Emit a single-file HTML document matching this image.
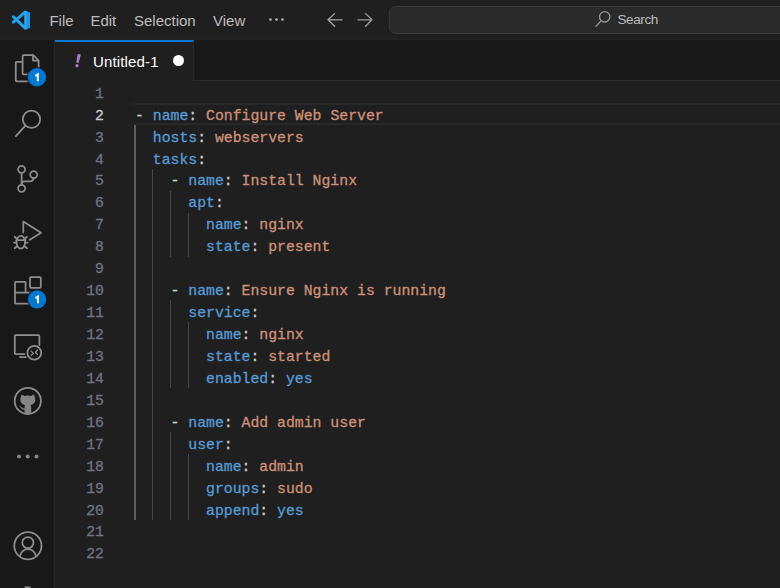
<!DOCTYPE html>
<html><head><meta charset="utf-8">
<style>
*{margin:0;padding:0;box-sizing:border-box}
html,body{width:780px;height:588px;overflow:hidden;background:#1f1f1f}
body{position:relative;font-family:"Liberation Sans",sans-serif}
#title{position:absolute;left:0;top:0;width:780px;height:40px;background:#1f1f1f;border-bottom:1px solid #242424}
.menu{position:absolute;top:12px;font-size:15px;color:#bdbdbd;line-height:17px;white-space:nowrap}
#search{position:absolute;left:388.7px;top:5.8px;width:420px;height:28.2px;border-radius:7px;background:#2a2a2a;border:1px solid #3a3a3a}
#act{position:absolute;left:0;top:40px;width:55px;height:548px;background:#181818;border-right:1px solid #2b2b2b}
#tabs{position:absolute;z-index:2;left:55px;top:40px;width:725px;height:41px;background:#181818;border-bottom:1px solid #2b2b2b}
#tab{position:absolute;left:0;top:0;width:139px;height:41px;background:#1f1f1f;border-top:2px solid #0078d4;border-right:1px solid #2b2b2b}
#editor{position:absolute;left:55px;top:80px;width:725px;height:508px;background:#1f1f1f}
#nums{position:absolute;left:0;top:3.7px;width:49px;text-align:right;color:#6e7681}
#nums .cur{color:#cccccc}
#code{position:absolute;left:80px;top:3.7px;color:#cccccc}
pre{font-family:"Liberation Mono",monospace;font-size:14.8px;line-height:21.94px;white-space:pre;margin:0;-webkit-text-stroke:0.3px currentColor}
.k{color:#569cd6}.s{color:#ce9178}
.g{position:absolute;width:1px;background:#454545}
#curline{position:absolute;left:79px;top:22.94px;width:646px;height:21.94px;border-top:2px solid #282828;border-bottom:2px solid #282828}
</style></head><body>
<div id="title">
  <svg style="position:absolute;left:0;top:0" width="40" height="40" viewBox="0 0 40 40">
    <g stroke="#22a0ee" stroke-width="3" stroke-linecap="round" fill="none">
      <path d="M13.4 22.2 L25 12.2"/>
      <path d="M13.4 16.9 L25 27.8"/>
    </g>
    <path fill="#1c98e8" d="M24.6 11.6 L26.6 11 L30 12.6 V27.8 L26.6 29.6 L24.6 29 Z"/>
    <path fill="#2eabf5" d="M24.4 11.6 L26.2 11.1 V29.5 L24.4 29 Z"/>
  </svg>
  <div class="menu" style="left:49.4px">File</div>
  <div class="menu" style="left:90.4px">Edit</div>
  <div class="menu" style="left:134px">Selection</div>
  <div class="menu" style="left:213px">View</div>
    <div id="search"></div>
  <svg style="position:absolute;left:0;top:0" width="780" height="40" viewBox="0 0 780 40">
   <g fill="#a6a6a6"><circle cx="270.5" cy="19.6" r="1.4"/><circle cx="276.5" cy="19.6" r="1.4"/><circle cx="282.5" cy="19.6" r="1.4"/></g>
   <g fill="none" stroke-width="1.3" stroke-linecap="round" stroke-linejoin="round">
    <path stroke="#a6a6a6" d="M328 19.8 H342 M334.6 13.6 L328 19.8 L334.6 26.2"/>
    <path stroke="#9a9a9a" d="M358 19.8 H372 M365.6 13.6 L372 19.8 L365.6 26.2"/>
    <circle stroke="#9a9a9a" cx="604.7" cy="16.8" r="5.2"/>
    <path stroke="#9a9a9a" d="M600.6 21.4 L596 26.4"/>
   </g>
  </svg>
  <div style="position:absolute;left:617.5px;top:12.3px;font-size:13.6px;line-height:16px;letter-spacing:-0.45px;color:#bcbcbc;white-space:nowrap">Search</div>
</div>
<div id="act"></div>
<svg id="icons" style="position:absolute;left:0;top:0" width="55" height="588" viewBox="0 0 55 588">
 <g fill="none" stroke="#8e8e8e" stroke-width="1.75" stroke-linejoin="round" stroke-linecap="round">
  <!-- explorer -->
  <path d="M21.6 61.8 H16.6 Q15.8 61.8 15.8 62.6 V80.6 Q15.8 81.4 16.6 81.4 H31 Q31.8 81.4 31.8 80.6 V75.2"/>
  <path d="M23.4 55.2 H33.3 L38.6 60.5 V73.6 Q38.6 74.4 37.8 74.4 H23.4 Q22.6 74.4 22.6 73.6 V56 Q22.6 55.2 23.4 55.2 Z"/>
  <path d="M33 55.4 V60.6 H38.4"/>
  <!-- search -->
  <circle cx="31.5" cy="119.2" r="8.7"/>
  <path d="M25.4 125.6 L15.9 136.1"/>
  <!-- scm -->
  <circle cx="21.6" cy="169.3" r="3.5"/>
  <circle cx="33.7" cy="174.6" r="3.5"/>
  <circle cx="21.6" cy="188.3" r="3.5"/>
  <path d="M21.6 172.8 V184.8"/>
  <path d="M33.7 178.1 Q33.4 181.4 29.5 181.4 H24.6 Q21.6 181.4 21.6 184"/>
  <!-- debug -->
  <path d="M23.3 232.6 V221.6 L41 232.8 L29.8 239.8"/>
  <ellipse cx="20.8" cy="242.2" rx="4.3" ry="6.3"/>
  <path d="M16.2 240 H25.4 M14.6 236.8 L16.4 238.2 M27 236.8 L25.2 238.2 M14 242.6 H16.2 M27.6 242.6 H25.4 M14.6 248.2 L16.4 246.8 M27 248.2 L25.2 246.8"/>
  <!-- extensions -->
  <path d="M15.8 281.8 H24.8 Q25.6 281.8 25.6 282.6 V292.6 H31 M15 292.6 H25.6 M15.8 281.8 Q15 281.8 15 282.6 V302.8 Q15 303.6 15.8 303.6 H30"/>
  <rect x="30" y="277" width="10.8" height="10.8" rx="1"/>
  <!-- remote -->
  <path d="M24.5 354 H15.6 Q14.8 354 14.8 353.2 V335.9 Q14.8 335.1 15.6 335.1 H38.6 Q39.4 335.1 39.4 335.9 V345"/>
  <path d="M20 357.2 H25.8"/>
  <circle cx="34.3" cy="352.7" r="6.9"/>
  <path d="M31.2 351.2 L33.3 353.2 L31.2 355.2 M37.4 350.2 L35.3 352.2 L37.4 354.2" stroke-width="1.3"/>
  <!-- github -->
  <circle cx="27.8" cy="400.9" r="13.1"/>
  <!-- account -->
  <circle cx="27.9" cy="545.7" r="13.6"/>
  <circle cx="27.9" cy="542.6" r="5.6"/>
  <path d="M20 555.6 Q22.4 549.2 27.9 549.2 Q33.4 549.2 36 555.6"/>
 </g>
 <!-- github octocat -->
 <path fill="#868686" d="M21 396.8 L21.6 394.4 L24.6 396 Q27.8 395.2 31 396 L34 394.4 L34.6 396.8 Q35.4 398 35.3 400 Q35 404.2 30.4 405 Q31.2 405.8 31.2 407.5 V412.8 Q27.8 413.6 24.6 412.8 V409.8 Q22.4 410 21.2 408.4 Q20.4 407 19 406.2 Q21 406.2 21.8 407.6 Q22.6 408.6 24.6 408.4 V407.2 Q24.6 405.6 25.2 405 Q20.6 404.2 20.3 400 Q20.2 398 21 396.8 Z"/>
 <!-- dots -->
 <g fill="#868686"><circle cx="19" cy="456.5" r="2"/><circle cx="27.7" cy="456.5" r="2"/><circle cx="36.5" cy="456.5" r="2"/></g>
 <!-- manage gear top -->
 <path d="M24.7 587.2 H30.5" stroke="#868686" stroke-width="1.6"/>
 <!-- badges -->
 <g><circle cx="36.9" cy="77.3" r="10.2" fill="#181818"/><circle cx="36.9" cy="77.3" r="9.2" fill="#0078d4"/>
 <path d="M35.2 76 L37.8 74.3 V81.2" fill="none" stroke="#fff" stroke-width="1.9" stroke-linejoin="miter"/></g>
 <g><circle cx="37.1" cy="299.4" r="10.2" fill="#181818"/><circle cx="37.1" cy="299.4" r="9.2" fill="#0078d4"/>
 <path d="M35.4 298.1 L38 296.4 V303.3" fill="none" stroke="#fff" stroke-width="1.9" stroke-linejoin="miter"/></g>
</svg>
<div id="tabs"><div id="tab">
  <svg style="position:absolute;left:15px;top:10px" width="12" height="18" viewBox="0 0 12 18"><path d="M7.6 2.3 L10.9 2.3 L8.7 10.8 L6.3 10.8 Z" fill="#a97bd0"/><circle cx="7" cy="13.7" r="1.6" fill="#a97bd0"/></svg>
  <div style="position:absolute;left:38px;top:11px;font-size:15px;color:#ffffff;line-height:17px;white-space:nowrap;letter-spacing:0.15px">Untitled-1</div>
  <div style="position:absolute;left:117.6px;top:12.9px;width:11px;height:11px;border-radius:50%;background:#ffffff"></div>
</div></div>
<div id="editor">
<div id="curline"></div>
<div class="g" style="left:79px;width:2px;background:#5e5e5e;top:44.88px;height:394.92px"></div>
<div class="g" style="left:97px;top:88.76px;height:351.04px"></div>
<div class="g" style="left:115px;top:110.70px;height:65.82px"></div>
<div class="g" style="left:115px;top:220.40px;height:87.76px"></div>
<div class="g" style="left:115px;top:352.04px;height:87.76px"></div>
<div class="g" style="left:133px;top:132.64px;height:43.88px"></div>
<div class="g" style="left:133px;top:242.34px;height:65.82px"></div>
<div class="g" style="left:133px;top:373.98px;height:65.82px"></div>
<pre id="nums"><span>1</span>
<span class="cur">2</span>
<span>3</span>
<span>4</span>
<span>5</span>
<span>6</span>
<span>7</span>
<span>8</span>
<span>9</span>
<span>10</span>
<span>11</span>
<span>12</span>
<span>13</span>
<span>14</span>
<span>15</span>
<span>16</span>
<span>17</span>
<span>18</span>
<span>19</span>
<span>20</span>
<span>21</span>
<span>22</span></pre>
<pre id="code">

- <span class="k">name</span>: <span class="s">Configure Web Server</span>
  <span class="k">hosts</span>: <span class="s">webservers</span>
  <span class="k">tasks</span>:
    - <span class="k">name</span>: <span class="s">Install Nginx</span>
      <span class="k">apt</span>:
        <span class="k">name</span>: <span class="s">nginx</span>
        <span class="k">state</span>: <span class="s">present</span>

    - <span class="k">name</span>: <span class="s">Ensure Nginx is running</span>
      <span class="k">service</span>:
        <span class="k">name</span>: <span class="s">nginx</span>
        <span class="k">state</span>: <span class="s">started</span>
        <span class="k">enabled</span>: <span class="k">yes</span>

    - <span class="k">name</span>: <span class="s">Add admin user</span>
      <span class="k">user</span>:
        <span class="k">name</span>: <span class="s">admin</span>
        <span class="k">groups</span>: <span class="s">sudo</span>
        <span class="k">append</span>: <span class="k">yes</span>

</pre>
</div>
</body></html>
